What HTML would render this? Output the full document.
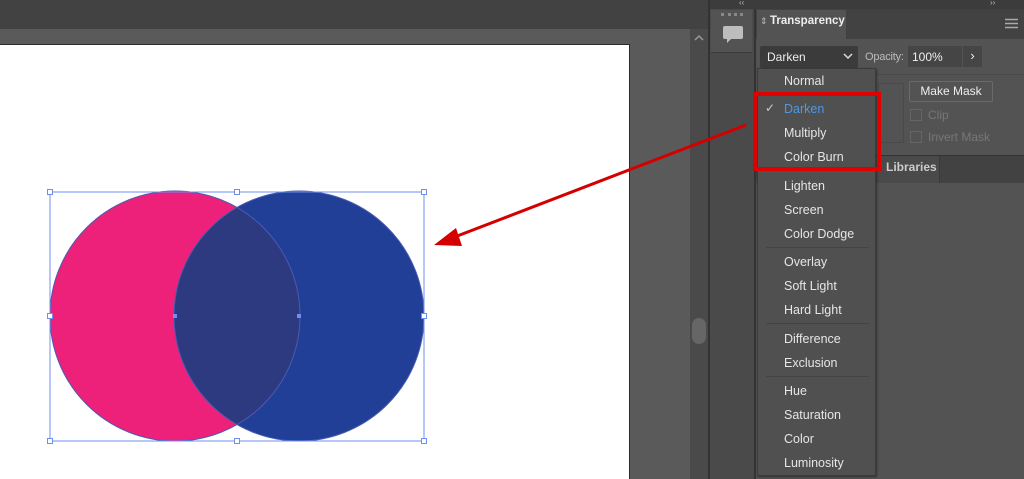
<!DOCTYPE html>
<html><head><style>
*{margin:0;padding:0;box-sizing:border-box}
body{width:1024px;height:479px;overflow:hidden;background:#535353;font-family:"Liberation Sans",sans-serif;position:relative}
.a{position:absolute}
.menu div.i{position:absolute;left:26px;font-size:12.5px;color:#e6e6e6}
.sep{position:absolute;left:8px;right:6px;height:1px;background:#444}
</style></head><body>
<div class="a" style="left:0;top:0;width:708px;height:29px;background:#424242"></div>
<div class="a" style="left:0;top:29px;width:690px;height:450px;background:#5a5a5a"></div>
<div class="a" style="left:0;top:44px;width:630px;height:435px;background:#fff;border-right:1px solid #2b2b2b;border-top:1px solid #2b2b2b"></div>
<div class="a" style="left:690px;top:29px;width:18px;height:450px;background:#4a4a4a"></div>
<div class="a" style="left:692px;top:318px;width:14px;height:26px;background:#666;border-radius:7px"></div>
<svg class="a" style="left:693px;top:34px" width="12" height="8"><polyline points="2,6 6,2 10,6" fill="none" stroke="#999" stroke-width="1.5"/></svg>
<div class="a" style="left:708px;top:0;width:2px;height:479px;background:#333"></div>
<div class="a" style="left:710px;top:0;width:44px;height:479px;background:#4a4a4a"></div>
<div class="a" style="left:710px;top:0;width:314px;height:9px;background:#3c3c3c"></div>
<div class="a" style="left:739px;top:-2px;color:#bbb;font-size:8px">‹‹</div>
<div class="a" style="left:990px;top:-2px;color:#bbb;font-size:8px">››</div>
<div class="a" style="left:711px;top:10px;width:41px;height:43px;background:#535353;border-bottom:1px solid #3a3a3a"></div>
<div class="a" style="left:721px;top:13px;width:22px;height:3px;border-top:3px dotted #888"></div>
<svg class="a" style="left:722px;top:25px" width="22" height="20"><path d="M3 1H19Q21 1 21 3V12Q21 14 19 14H9L5 18V14H3Q1 14 1 12V3Q1 1 3 1Z" fill="#bdbdbd"/></svg>
<div class="a" style="left:754px;top:9px;width:2px;height:470px;background:#333"></div>
<div class="a" style="left:756px;top:9px;width:268px;height:30px;background:#424242"></div>
<div class="a" style="left:757px;top:10px;width:89px;height:29px;background:#535353"></div>
<div class="a" style="left:760px;top:16px;color:#bbb;font-size:9px">⇕</div>
<div class="a" style="left:770px;top:15px;color:#eee;font-size:11.5px;font-weight:bold">Transparency</div>
<svg class="a" style="left:1005px;top:18px" width="13" height="11"><path d="M0 1.5H13M0 5.5H13M0 9.5H13" stroke="#aaa" stroke-width="1.6"/></svg>
<div class="a" style="left:756px;top:39px;width:268px;height:116px;background:#535353"></div>
<div class="a" style="left:760px;top:46px;width:98px;height:22px;background:#3b3b3b;border-radius:2px"></div>
<div class="a" style="left:767px;top:50px;color:#eee;font-size:12px">Darken</div>
<svg class="a" style="left:843px;top:53px" width="10" height="7"><polyline points="1,1 5,5 9,1" fill="none" stroke="#ddd" stroke-width="1.5"/></svg>
<div class="a" style="left:908px;top:46px;width:54px;height:21px;background:#454545"></div>
<div class="a" style="left:865px;top:51px;color:#bbb;font-size:11px;letter-spacing:-0.2px;z-index:2">Opacity:</div>
<div class="a" style="left:912px;top:50px;color:#eee;font-size:12px">100%</div>
<div class="a" style="left:963px;top:46px;width:19px;height:21px;background:#454545;color:#eee;font-size:13px;text-align:center;line-height:20px">›</div>
<div class="a" style="left:870px;top:74px;width:154px;height:1px;background:#4a4a4a"></div>
<div class="a" style="left:878px;top:83px;width:26px;height:60px;border:1px solid #4a4a4a"></div>
<div class="a" style="left:909px;top:81px;width:84px;height:21px;border:1px solid #6a6a6a;border-radius:2px;color:#eee;font-size:12px;text-align:center;line-height:19px">Make Mask</div>
<div class="a" style="left:910px;top:109px;width:12px;height:12px;border:1px solid #666"></div>
<div class="a" style="left:928px;top:108px;color:#777;font-size:12px">Clip</div>
<div class="a" style="left:910px;top:131px;width:12px;height:12px;border:1px solid #666"></div>
<div class="a" style="left:928px;top:130px;color:#777;font-size:12px">Invert Mask</div>
<div class="a" style="left:756px;top:155px;width:268px;height:28px;background:#424242;border-top:1px solid #333"></div>
<div class="a" style="left:876px;top:156px;width:64px;height:27px;background:#4a4a4a;border-right:1px solid #3a3a3a"></div>
<div class="a" style="left:886px;top:160px;color:#ccc;font-size:12px;font-weight:bold">Libraries</div>
<div class="a" style="left:756px;top:183px;width:268px;height:296px;background:#535353"></div>
<div class="a menu" style="left:757px;top:68px;width:119px;height:408px;background:#505050;border:1px solid #3a3a3a;box-shadow:1px 1px 2px rgba(0,0,0,.4)">
<div class="i" style="top:5px">Normal</div>
<div class="sep" style="top:25px"></div>
<div class="a" style="left:7px;top:32px;color:#ccc;font-size:12px">✓</div>
<div class="i" style="top:33px;color:#4a9ae6">Darken</div>
<div class="i" style="top:57px">Multiply</div>
<div class="i" style="top:81px">Color Burn</div>
<div class="i" style="top:110px">Lighten</div>
<div class="i" style="top:134px">Screen</div>
<div class="i" style="top:158px">Color Dodge</div>
<div class="sep" style="top:178px"></div>
<div class="i" style="top:186px">Overlay</div>
<div class="i" style="top:210px">Soft Light</div>
<div class="i" style="top:234px">Hard Light</div>
<div class="sep" style="top:254px"></div>
<div class="i" style="top:263px">Difference</div>
<div class="i" style="top:287px">Exclusion</div>
<div class="sep" style="top:307px"></div>
<div class="i" style="top:315px">Hue</div>
<div class="i" style="top:339px">Saturation</div>
<div class="i" style="top:363px">Color</div>
<div class="i" style="top:387px">Luminosity</div>
</div>
<svg class="a" style="left:0;top:0" width="1024" height="479">
<defs><clipPath id="c"><circle cx="175" cy="316" r="125"/></clipPath></defs>
<circle cx="175" cy="316" r="125" fill="#ee217a"/>
<circle cx="299" cy="316" r="125" fill="#223f98"/>
<circle cx="299" cy="316" r="125" fill="#2d3a80" clip-path="url(#c)"/>
<circle cx="175" cy="316" r="125" fill="none" stroke="#4a5ab0" stroke-width="1"/>
<circle cx="299" cy="316" r="125" fill="none" stroke="#4a5ab0" stroke-width="1"/>
<rect x="50" y="192" width="374" height="249" fill="none" stroke="#6c8ff0" stroke-width="1"/>
<g fill="#fff" stroke="#6c8ff0">
<rect x="47.5" y="189.5" width="5" height="5"/><rect x="234.5" y="189.5" width="5" height="5"/><rect x="421.5" y="189.5" width="5" height="5"/>
<rect x="47.5" y="313.5" width="5" height="5"/><rect x="421.5" y="313.5" width="5" height="5"/>
<rect x="47.5" y="438.5" width="5" height="5"/><rect x="234.5" y="438.5" width="5" height="5"/><rect x="421.5" y="438.5" width="5" height="5"/>
</g>
<rect x="173" y="314" width="4" height="4" fill="#6c8ff0"/><rect x="297" y="314" width="4" height="4" fill="#6c8ff0"/>
<line x1="746" y1="125" x2="452" y2="238" stroke="#d40000" stroke-width="3"/>
<polygon points="434,245 456,228 462,246" fill="#d40000"/>
<rect x="755" y="94" width="124" height="75" fill="none" stroke="#e00000" stroke-width="4"/>
</svg>
</body></html>
